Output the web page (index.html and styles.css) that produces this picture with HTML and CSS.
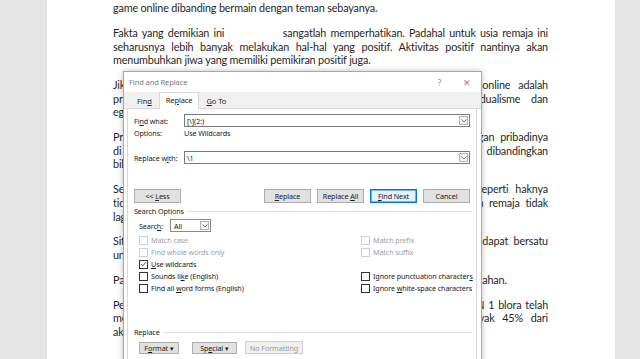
FILE: index.html
```html
<!DOCTYPE html>
<html>
<head>
<meta charset="utf-8">
<link rel="stylesheet" href="styles.css">
</head>
<body>
<div class="page">
  <p><span class="ln last">game online dibanding bermain dengan teman sebayanya.</span></p>
  <p>
    <span class="ln">Fakta yang demikian ini <span class="gap"></span> sangatlah memperhatikan. Padahal untuk usia remaja ini</span>
    <span class="ln">seharusnya lebih banyak melakukan hal-hal yang positif. Aktivitas positif nantinya akan</span>
    <span class="ln last">menumbuhkan jiwa yang memiliki pemikiran positif juga.</span>
  </p>
  <p>
    <span class="ln">Jik<span class="under">a dilihat dari sisi psikologis, dampak negatif yang ditimbulkan game</span> online adalah</span>
    <span class="ln">pr<span class="under">ibadi remaja menjadi tertutup, sehingga menumbuhkan sifat indivi</span>dualisme dan</span>
    <span class="ln last">eg<span class="under">ois.</span></span>
  </p>
  <p>
    <span class="ln">Pr<span class="under">ivasi para remaja lebih banyak dihabiskan di dunia maya untuk kesenan</span>gan pribadinya</span>
    <span class="ln">di <span class="under">depan layar komputer ataupun gadget yang mereka miliki</span> dibandingkan</span>
    <span class="ln last">bil<span class="under">a harus bersosialisasi dengan keluarga dan teman.</span></span>
  </p>
  <p>
    <span class="ln">Se<span class="under">lain itu, remaja yang kecanduan game online cenderung tidak peduli s</span>eperti haknya</span>
    <span class="ln">tid<span class="under">ak mau tahu dengan keadaan lingkungan di sekitarnya. Padahal kalanga</span>n remaja tidak</span>
    <span class="ln last">lag<span class="under">i seharusnya bersikap seperti itu.</span></span>
  </p>
  <p>
    <span class="ln">Sif<span class="under">at individualisme yang dimiliki remaja inilah yang membuat mereka tidak</span> dapat bersatu</span>
    <span class="ln last">un<span class="under">tuk bermasyarakat.</span></span>
  </p>
  <p>
    <span class="ln last">Pa<span class="under">da akhirnya, kecanduan game online ini dapat menimbulkan berbagai permasal</span>ahan.</span>
  </p>
  <p>
    <span class="ln">Pe<span class="under">nelitian yang dilakukan oleh guru BK terhadap para siswa-siswinya di SMA</span>N 1 blora telah</span>
    <span class="ln">me<span class="under">nunjukkan bahwa siswa yang sering bermain game online itu seban</span>yak 45% dari</span>
    <span class="ln last">ak<span class="under">umulasi seluruh siswa.</span></span>
  </p>
</div>

<div class="dialog">
  <div class="titlebar">
    <span class="title">Find and Replace</span>
    <span class="tb-help">?</span>
    <span class="tb-close">&#x2715;</span>
  </div>
  <div class="tabs">
    <span class="tab">Fin<u>d</u></span>
    <span class="tab active">Re<u>p</u>lace</span>
    <span class="tab"><u>G</u>o To</span>
  </div>
  <div class="panel">
    <div class="row field">
      <span class="label">Fi<u>n</u>d what:</span>
      <div class="combo"><span class="val">[\](2:)</span><span class="drop"><svg width="6" height="4" viewBox="0 0 6 4"><path d="M0.5 0.5 L3 3 L5.5 0.5" fill="none" stroke="#555" stroke-width="0.8"/></svg></span></div>
    </div>
    <div class="row opts">
      <span class="label">Options:</span>
      <span>Use Wildcards</span>
    </div>
    <div class="row field repl">
      <span class="label">Replace w<u>i</u>th:</span>
      <div class="combo"><span class="val">\1</span><span class="drop"><svg width="6" height="4" viewBox="0 0 6 4"><path d="M0.5 0.5 L3 3 L5.5 0.5" fill="none" stroke="#555" stroke-width="0.8"/></svg></span></div>
    </div>
    <div class="row buttons">
      <span class="btn less"><span>&lt;&lt; <u>L</u>ess</span></span>
      <span class="spacer"></span>
      <span class="btn"><span><u>R</u>eplace</span></span>
      <span class="btn"><span>Replace <u>A</u>ll</span></span>
      <span class="btn primary"><span><u>F</u>ind Next</span></span>
      <span class="btn"><span>Cancel</span></span>
    </div>
    <div class="group">
      <span class="group-label">Search Options</span>
      <span class="group-line"></span>
    </div>
    <div class="row search">
      <span class="slabel">Searc<u>h</u>:</span>
      <div class="select"><span class="val">All</span><span class="drop"><svg width="6" height="4" viewBox="0 0 6 4"><path d="M0.5 0.5 L3 3 L5.5 0.5" fill="none" stroke="#555" stroke-width="0.8"/></svg></span></div>
    </div>
    <div class="checks">
      <div class="col left">
        <div class="chk disabled"><span class="box"></span><span>Match case</span></div>
        <div class="chk disabled"><span class="box"></span><span>Find whole words only</span></div>
        <div class="chk"><span class="box"><svg width="8" height="8" viewBox="0 0 8 8"><path d="M1.3 4.2 L3.2 6 L6.8 1.8" fill="none" stroke="#222" stroke-width="0.9"/></svg></span><span><u>U</u>se wildcards</span></div>
        <div class="chk"><span class="box"></span><span>Sounds li<u>k</u>e (English)</span></div>
        <div class="chk"><span class="box"></span><span>Find all <u>w</u>ord forms (English)</span></div>
      </div>
      <div class="col right">
        <div class="chk disabled"><span class="box"></span><span>Match prefix</span></div>
        <div class="chk disabled"><span class="box"></span><span>Match suffix</span></div>
        <div class="chk"></div>
        <div class="chk"><span class="box"></span><span>Ignore punctuation character<u>s</u></span></div>
        <div class="chk"><span class="box"></span><span>Ignore <u>w</u>hite-space characters</span></div>
      </div>
    </div>
    <div class="group replace-group">
      <span class="group-label">Replace</span>
      <span class="group-line"></span>
    </div>
    <div class="row bottom">
      <span class="btn small fmt"><span>F<u>o</u>rmat &#x25BE;</span></span>
      <span class="btn small spc"><span>Sp<u>e</u>cial &#x25BE;</span></span>
      <span class="btn small disabled"><span>No Formatting</span></span>
    </div>
  </div>
</div>
</body>
</html>
```

FILE: styles.css
```css
html, body {
  margin: 0;
  padding: 0;
}
body {
  background: #e4e4e4;
  width: 640px;
  height: 359px;
  overflow: hidden;
  position: relative;
}
.page {
  margin-left: 47px;
  width: 568px;
  height: 359px;
  background: #fff;
  box-sizing: border-box;
  padding: 1.2px 67px 0 66px;
  overflow: hidden;
  font-family: Lato, "Open Sans", sans-serif;
  font-size: 10.8px;
  letter-spacing: -0.15px;
  line-height: 13.6px;
  color: #1f1f1f;
}
.page p {
  margin: 0 0 11.3px;
}
.ln {
  display: block;
  text-align: justify;
  text-align-last: justify;
}
.ln.last {
  text-align-last: left;
}
.under {
  visibility: hidden;
}
.gap {
  display: inline-block;
  width: 50px;
}

/* dialog */
.dialog {
  position: absolute;
  left: 123px;
  top: 71px;
  width: 359px;
  height: 300px;
  box-sizing: border-box;
  background: #fff;
  border: 1px solid #a8a8a8;
  box-shadow: 0 0 6px rgba(0,0,0,0.25);
  font-family: "Noto Sans", "Open Sans", sans-serif;
  font-size: 7.2px;
  letter-spacing: -0.1px;
  color: #1a1a1a;
  white-space: nowrap;
}
.dialog u {
  text-decoration: underline;
  text-underline-offset: 1px;
}
.titlebar {
  height: 20px;
  display: flex;
  align-items: center;
  padding-left: 5px;
  background: #fff;
}
.title {
  flex: 1;
  color: #7a7a7a;
  font-size: 7.5px;
}
.tb-help {
  color: #888;
  font-size: 8px;
  margin-right: 22px;
}
.tb-close {
  color: #888;
  font-size: 9px;
  margin-right: 10px;
}
.tabs {
  height: 16px;
  background: #f0f0f0;
  display: flex;
  align-items: flex-end;
  padding-left: 6px;
  border-bottom: 1px solid #d9d9d9;
}
.tab {
  height: 14px;
  line-height: 14px;
  padding: 0 7px;
  color: #222;
  font-size: 7.5px;
}
.tab.active {
  background: #fff;
  border: 1px solid #d9d9d9;
  border-bottom: none;
  height: 16px;
  line-height: 15px;
  margin-bottom: -1px;
  padding: 0 6px;
}
.panel {
  margin: 0 4px 0 3px;
  border-left: 1px solid #d9d9d9;
  border-right: 1px solid #d9d9d9;
  background: #fff;
  padding: 5px 6px 0 6px;
  height: 260px;
}
.row {
  display: flex;
  align-items: center;
}
.label {
  width: 50px;
  flex: none;
}
.field {
  height: 13px;
}
.combo {
  flex: 1;
  height: 13px;
  box-sizing: border-box;
  border: 1px solid #7a7a7a;
  display: flex;
  align-items: center;
  justify-content: space-between;
  padding-left: 2px;
}
.drop {
  width: 9px;
  height: 9px;
  box-sizing: border-box;
  border: 1px solid #b5b5b5;
  background: #f3f3f3;
  display: flex;
  align-items: center;
  justify-content: center;
  margin-right: 1px;
}
.opts {
  height: 11px;
}
.repl {
  margin-top: 13px;
}
.buttons {
  margin-top: 25px;
  gap: 6px;
}
.spacer {
  flex: 1;
}
.btn {
  height: 14px;
  box-sizing: border-box;
  border: 1px solid #adadad;
  background: #e1e1e1;
  display: flex;
  align-items: center;
  justify-content: center;
  width: 47px;
  flex: none;
}
.btn.primary {
  border: 1px solid #0078d7;
  box-shadow: inset 0 0 0 0.5px #0078d7;
  background: #e5f1fb;
}
.group {
  display: flex;
  align-items: center;
  margin-top: 2px;
  height: 12px;
  margin-right: -2px;
}
.group-line {
  flex: 1;
  border-top: 1px solid #dcdcdc;
  margin-left: 4px;
}
.search {
  margin-top: 2px;
  padding-left: 5px;
  height: 13px;
}
.slabel {
  width: 31px;
}
.select {
  width: 41px;
  height: 13px;
  box-sizing: border-box;
  border: 1px solid #8a8a8a;
  display: flex;
  align-items: center;
  justify-content: space-between;
  padding-left: 3px;
}
.checks {
  display: flex;
  padding-left: 5px;
  margin-top: 2px;
}
.col.left {
  width: 222px;
  flex: none;
}
.col.right {
  flex: none;
}
.chk {
  height: 12px;
  display: flex;
  align-items: center;
}
.box {
  width: 9px;
  height: 9px;
  box-sizing: border-box;
  border: 1px solid #333;
  background: #fff;
  margin-right: 3px;
  display: flex;
  align-items: center;
  justify-content: center;
  flex: none;
}
.chk.disabled {
  color: #a0a0a0;
}
.chk.disabled .box {
  border-color: #cfcfcf;
}
.replace-group {
  margin-top: 32px;
}
.bottom {
  margin-top: 3px;
  padding-left: 5px;
}
.btn.small {
  height: 12px;
}
.btn.fmt {
  width: 40px;
}
.btn.spc {
  width: 45px;
  margin-left: 13px;
}
.btn.disabled {
  width: 58px;
  height: 13px;
  margin-left: 8px;
  color: #9a9a9a;
  background: #f0f0f0;
  border-color: #cfcfcf;
}
```
